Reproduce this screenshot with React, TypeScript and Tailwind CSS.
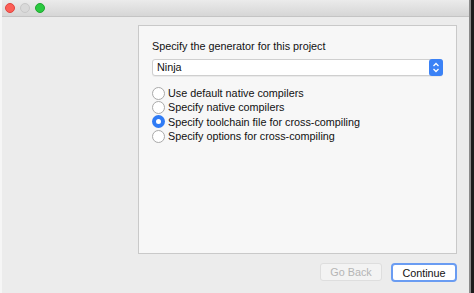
import React from "react";

const options = [
  "Use default native compilers",
  "Specify native compilers",
  "Specify toolchain file for cross-compiling",
  "Specify options for cross-compiling",
];

const TrafficLights: React.FC = () => (
  <div className="flex items-center gap-[5px] pl-[3px]">
    <span className="w-[10px] h-[10px] rounded-full bg-[#fc5f57] border border-[#e0443e]" />
    <span className="w-[10px] h-[10px] rounded-full bg-[#d9d9d9] border border-[#c8c8c8]" />
    <span className="w-[10px] h-[10px] rounded-full bg-[#2ac940] border border-[#1fa62f]" />
  </div>
);

const Radio: React.FC<{ checked: boolean }> = ({ checked }) =>
  checked ? (
    <span className="w-[13px] h-[13px] rounded-full bg-[#2f7bf5] flex items-center justify-center">
      <span className="w-[5px] h-[5px] rounded-full bg-white" />
    </span>
  ) : (
    <span className="w-[13px] h-[13px] rounded-full bg-white border border-[#a9a9a9]" />
  );

const App: React.FC = () => {
  const [selected, setSelected] = React.useState(2);

  return (
    <div
      className="w-[474px] h-[293px] flex bg-[#1c1c1c] overflow-hidden text-[#111]"
      style={{ fontFamily: '"Liberation Sans", Arial, sans-serif' }}
    >
      <div className="w-[469px] h-full flex flex-col bg-[#ececec] border-l-2 border-[#f6f6f6]">
        {/* Title bar */}
        <div className="h-[17px] flex items-center bg-gradient-to-b from-[#ebebeb] to-[#d6d6d6] border-b border-[#c4c4c4]">
          <TrafficLights />
        </div>

        {/* Body */}
        <div className="flex-1 flex flex-col pl-[136px] pr-[12px] pt-[8px]">
          <div className="h-[229px] bg-[#f7f7f7] border border-[#c9c9c9] px-[13px] pt-[14px]">
            <p className="text-[10.8px] leading-[13px]">Specify the generator for this project</p>

            <div className="mt-[6px] h-[17px] flex items-center justify-between bg-white border border-[#cfcfcf] rounded-[3px] shadow-[0_1px_0_rgba(0,0,0,0.05)]">
              <span className="pl-[4px] text-[10.8px]">Ninja</span>
              <span className="w-[14px] h-[17px] -mr-px rounded-[3px] bg-[#3b82f6] flex items-center justify-center">
                <svg width="8" height="11" viewBox="0 0 8 11" fill="none" stroke="white" strokeWidth="1.3">
                  <path d="M1.5 4 L4 1.5 L6.5 4" />
                  <path d="M1.5 7 L4 9.5 L6.5 7" />
                </svg>
              </span>
            </div>

            <div className="mt-[10px] flex flex-col">
              {options.map((label, i) => (
                <label
                  key={label}
                  className="flex items-center gap-[3px] h-[14.3px] cursor-default"
                  onClick={() => setSelected(i)}
                >
                  <Radio checked={selected === i} />
                  <span className="text-[10.8px]">{label}</span>
                </label>
              ))}
            </div>
          </div>

          {/* Buttons */}
          <div className="mt-[9px] flex justify-end gap-[9px]">
            <button className="w-[62px] h-[18px] rounded-[3px] bg-[#f3f3f3] border border-[#dedede] text-[10.8px] text-[#b5b5b5]">
              Go Back
            </button>
            <button className="w-[66px] h-[19px] rounded-[4px] bg-white border-2 border-[#6a9cf2] text-[10.8px] text-[#111]">
              Continue
            </button>
          </div>
        </div>
      </div>
      <div className="w-[2px] bg-[#8a8a8a]" />
    </div>
  );
};

export default App;
